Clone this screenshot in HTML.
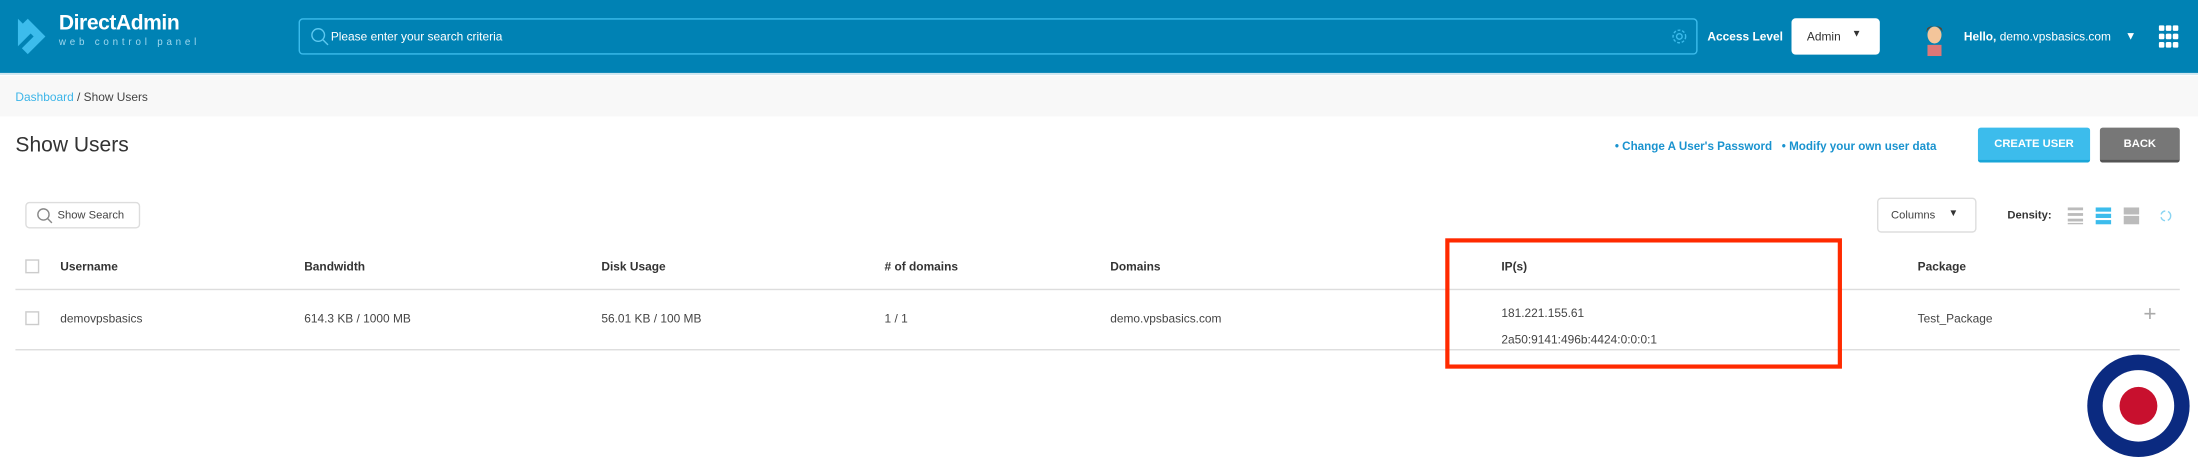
<!DOCTYPE html>
<html><head><meta charset="utf-8"><style>
*{margin:0;padding:0;box-sizing:border-box}
html,body{width:2198px;height:465px;overflow:hidden;background:#fff}
body{font-family:"Liberation Sans",sans-serif;color:#333;position:relative}
#w{position:absolute;left:0;top:0;width:1568px;height:332px;transform:scale(1.4018);transform-origin:0 0}
.a{position:absolute;white-space:nowrap}
.hdr{position:absolute;left:0;top:0;width:1568px;height:53px;background:#0082b4;border-bottom:1px solid #cfe6ef}
.bc{position:absolute;left:0;top:54px;width:1568px;height:29px;background:#f8f8f8}
.th{font-size:8.5px;font-weight:bold;color:#333;top:185px}
.td{font-size:8.5px;color:#444;top:222px}
.cb{position:absolute;width:10px;height:10px;border:1px solid #ccc;background:#fff}
.btn{display:flex;align-items:center;justify-content:center}
</style></head><body><div id="w">
<div class="hdr"></div>
<svg class="a" style="left:10px;top:10px" width="28" height="32" viewBox="0 0 40 44"><path d="M4 4 L18 18 L4 32 Z M14 4 L32 22 L14 40 L8 34 L20 22 L8 10 Z" fill="#3cbcec"/></svg>
<div class="a" style="left:42px;top:8px;font-size:15px;font-weight:bold;color:#fff;letter-spacing:-0.3px">DirectAdmin</div>
<div class="a" style="left:42px;top:27px;font-size:7px;color:#9fd8ef;letter-spacing:2.7px">web control panel</div>
<div class="a" style="left:213px;top:13px;width:998px;height:26px;border:1px solid #3cbcec;border-radius:3px"></div>
<svg class="a" style="left:221px;top:19px" width="14" height="14"><circle cx="6" cy="6" r="4.5" fill="none" stroke="#5cc8f0" stroke-width="1"/><line x1="9.5" y1="9.5" x2="13" y2="13" stroke="#5cc8f0"/></svg>
<div class="a" style="left:236px;top:21px;font-size:8.5px;color:#fff">Please enter your search criteria</div>
<svg class="a" style="left:1192px;top:19px" width="12" height="14"><circle cx="6" cy="7" r="4.5" fill="none" stroke="#3cbcec" stroke-dasharray="2 1.3"/><circle cx="6" cy="7" r="2" fill="none" stroke="#3cbcec"/></svg>
<div class="a" style="left:1218px;top:21px;font-size:8.5px;font-weight:bold;color:#fff">Access Level</div>
<div class="a" style="left:1278px;top:13px;width:63px;height:26px;background:#fff;border-radius:3px"></div>
<div class="a" style="left:1289px;top:21px;font-size:8.5px;color:#333">Admin</div>
<div class="a" style="left:1321px;top:21px;font-size:7px;color:#333">▼</div>
<svg class="a" style="left:1370px;top:14px" width="20" height="26"><rect x="5" y="18" width="10" height="8" fill="#d77"/><ellipse cx="10" cy="11" rx="5" ry="6" fill="#f3c59a"/><path d="M4 9 Q10 0 16 9 L15 6 Q10 3 5 6Z" fill="#6b3d1e"/></svg>
<div class="a" style="left:1401px;top:21px;font-size:8.5px;color:#fff"><b>Hello,</b> demo.vpsbasics.com</div>
<div class="a" style="left:1516px;top:21px;font-size:8px;color:#fff">▼</div>
<svg class="a" style="left:1540px;top:18px" width="14" height="17"><g fill="#fff"><rect x="0" y="0" width="4" height="4" rx="1"/><rect x="5" y="0" width="4" height="4" rx="1"/><rect x="10" y="0" width="4" height="4" rx="1"/><rect x="0" y="6" width="4" height="4" rx="1"/><rect x="5" y="6" width="4" height="4" rx="1"/><rect x="10" y="6" width="4" height="4" rx="1"/><rect x="0" y="12" width="4" height="4" rx="1"/><rect x="5" y="12" width="4" height="4" rx="1"/><rect x="10" y="12" width="4" height="4" rx="1"/></g></svg>
<div class="bc"></div>
<div class="a" style="left:11px;top:64px;font-size:8.5px;color:#444"><span style="color:#3cb5e8">Dashboard</span> / Show Users</div>
<div class="a" style="left:11px;top:95px;font-size:15px;color:#333">Show Users</div>
<div class="a" style="left:1152px;top:99px;font-size:8.3px;font-weight:bold;color:#1a93cf">• Change A User's Password &nbsp;&nbsp;• Modify your own user data</div>
<div class="a btn" style="left:1411px;top:91px;width:80px;height:25px;background:#3cbcec;border-bottom:2px solid #1aa6d8;border-radius:2px;color:#fff;font-size:8px;font-weight:bold">CREATE USER</div>
<div class="a btn" style="left:1498px;top:91px;width:57px;height:25px;background:#777;border-bottom:2px solid #555;border-radius:2px;color:#fff;font-size:8px;font-weight:bold">BACK</div>
<div class="a" style="left:18px;top:144px;width:82px;height:19px;border:1px solid #ddd;border-radius:3px"></div>
<svg class="a" style="left:26px;top:148px" width="12" height="12"><circle cx="5" cy="5" r="4" fill="none" stroke="#888"/><line x1="8" y1="8" x2="11" y2="11" stroke="#888"/></svg>
<div class="a" style="left:41px;top:149px;font-size:8px;color:#444">Show Search</div>
<div class="a" style="left:1339px;top:141px;width:71px;height:25px;border:1px solid #ddd;border-radius:3px"></div>
<div class="a" style="left:1349px;top:149px;font-size:8px;color:#444">Columns</div>
<div class="a" style="left:1390px;top:149px;font-size:7px;color:#333">▼</div>
<div class="a" style="left:1432px;top:149px;font-size:8px;font-weight:bold;color:#333">Density:</div>
<svg class="a" style="left:1475px;top:147px" width="80" height="14"><g fill="#bbb"><rect x="0" y="1" width="11" height="2"/><rect x="0" y="5" width="11" height="2"/><rect x="0" y="9" width="11" height="2"/><rect x="0" y="12" width="11" height="1"/></g><g fill="#3cbcec"><rect x="20" y="1" width="11" height="3"/><rect x="20" y="5.5" width="11" height="3"/><rect x="20" y="10" width="11" height="3"/></g><g fill="#bbb"><rect x="40" y="1" width="11" height="5"/><rect x="40" y="7" width="11" height="6"/></g><circle cx="70" cy="7" r="3.5" fill="none" stroke="#8ad4f2" stroke-dasharray="4 2"/></svg>
<div class="cb" style="left:18px;top:185px"></div>
<div class="a th" style="left:43px">Username</div>
<div class="a th" style="left:217px">Bandwidth</div>
<div class="a th" style="left:429px">Disk Usage</div>
<div class="a th" style="left:631px"># of domains</div>
<div class="a th" style="left:792px">Domains</div>
<div class="a th" style="left:1071px">IP(s)</div>
<div class="a th" style="left:1368px">Package</div>
<div class="a" style="left:11px;top:206px;width:1544px;height:1px;background:#ddd"></div>
<div class="cb" style="left:18px;top:222px"></div>
<div class="a td" style="left:43px">demovpsbasics</div>
<div class="a td" style="left:217px">614.3 KB / 1000 MB</div>
<div class="a td" style="left:429px">56.01 KB / 100 MB</div>
<div class="a td" style="left:631px">1 / 1</div>
<div class="a td" style="left:792px">demo.vpsbasics.com</div>
<div class="a td" style="left:1071px;top:214px;line-height:19px">181.221.155.61<br>2a50:9141:496b:4424:0:0:0:1</div>
<div class="a td" style="left:1368px">Test_Package</div>
<div class="a" style="left:1529px;top:216px;font-size:16px;color:#aaa">+</div>
<div class="a" style="left:11px;top:249px;width:1544px;height:1px;background:#ddd"></div>
<div class="a" style="left:1031px;top:170px;width:283px;height:93px;border:3px solid #ff2a00"></div>
<div class="a" style="left:1489px;top:253px;width:73px;height:73px;border-radius:50%;background:#0b2a80"></div>
<div class="a" style="left:1500px;top:264px;width:51px;height:51px;border-radius:50%;background:#fff"></div>
<div class="a" style="left:1512px;top:276px;width:27px;height:27px;border-radius:50%;background:#c8102e"></div>
</div></body></html>
